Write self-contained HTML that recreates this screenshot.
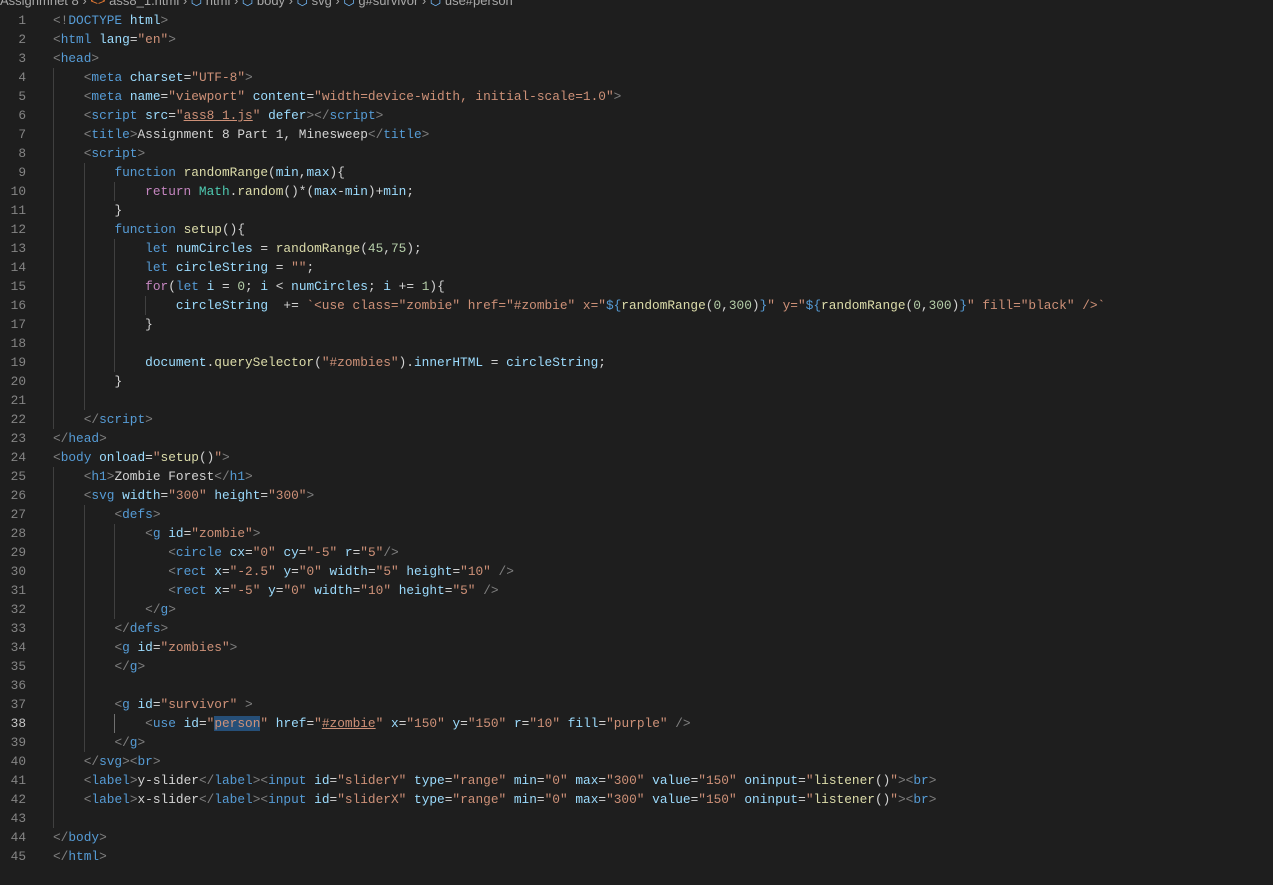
<!DOCTYPE html>
<html><head><meta charset="utf-8"><style>
body{margin:0;background:#1e1e1e;width:1273px;height:885px;overflow:hidden;font-family:"Liberation Mono",monospace;font-size:12.8px;}
.bc{position:absolute;left:0;top:-7px;height:14px;font-family:"Liberation Sans",sans-serif;font-size:13px;color:#a9a9a9;white-space:pre;}
.bc .ic{color:#75beff}
.code{position:absolute;top:11px;left:0;}
.l{height:19px;line-height:19px;white-space:pre;position:relative;}
.n{position:absolute;left:0;width:26px;text-align:right;color:#858585;}
.n.cur{color:#c6c6c6}
.x{position:absolute;left:53px;color:#d4d4d4;}
i{display:inline-block;width:30.72px;height:19px;vertical-align:top;box-sizing:border-box;border-left:1px solid #404040;}
i.h{border-left-color:#707070}
.b{color:#808080}.t{color:#569cd6}.a{color:#9cdcfe}.s{color:#ce9178}.k{color:#569cd6}.c{color:#c586c0}.f{color:#dcdcaa}.v{color:#9cdcfe}.m{color:#b5cea8}.y{color:#4ec9b0}
.sel{background:#264f78}
.u{text-decoration:underline;text-decoration-color:#ce9178}
</style></head><body>
<div class="bc">Assignmnet 8 <span>›</span> <span style="color:#e37933">&lt;&gt;</span> ass8_1.html › <span class="ic">⬡</span> html › <span class="ic">⬡</span> body › <span class="ic">⬡</span> svg › <span class="ic">⬡</span> g#survivor › <span class="ic">⬡</span> use#person</div>
<div class="code">
<div class="l"><span class="n">1</span><span class="x"><span class="b">&lt;!</span><span class="t">DOCTYPE</span> <span class="a">html</span><span class="b">&gt;</span></span></div>
<div class="l"><span class="n">2</span><span class="x"><span class="b">&lt;</span><span class="t">html</span> <span class="a">lang</span>=<span class="s">"en"</span><span class="b">&gt;</span></span></div>
<div class="l"><span class="n">3</span><span class="x"><span class="b">&lt;</span><span class="t">head</span><span class="b">&gt;</span></span></div>
<div class="l"><span class="n">4</span><span class="x"><i></i><span class="b">&lt;</span><span class="t">meta</span> <span class="a">charset</span>=<span class="s">"UTF-8"</span><span class="b">&gt;</span></span></div>
<div class="l"><span class="n">5</span><span class="x"><i></i><span class="b">&lt;</span><span class="t">meta</span> <span class="a">name</span>=<span class="s">"viewport"</span> <span class="a">content</span>=<span class="s">"width=device-width, initial-scale=1.0"</span><span class="b">&gt;</span></span></div>
<div class="l"><span class="n">6</span><span class="x"><i></i><span class="b">&lt;</span><span class="t">script</span> <span class="a">src</span>=<span class="s">"<span class="u">ass8_1.js</span>"</span> <span class="a">defer</span><span class="b">&gt;&lt;/</span><span class="t">script</span><span class="b">&gt;</span></span></div>
<div class="l"><span class="n">7</span><span class="x"><i></i><span class="b">&lt;</span><span class="t">title</span><span class="b">&gt;</span>Assignment 8 Part 1, Minesweep<span class="b">&lt;/</span><span class="t">title</span><span class="b">&gt;</span></span></div>
<div class="l"><span class="n">8</span><span class="x"><i></i><span class="b">&lt;</span><span class="t">script</span><span class="b">&gt;</span></span></div>
<div class="l"><span class="n">9</span><span class="x"><i></i><i></i><span class="k">function</span> <span class="f">randomRange</span>(<span class="v">min</span>,<span class="v">max</span>){</span></div>
<div class="l"><span class="n">10</span><span class="x"><i></i><i></i><i></i><span class="c">return</span> <span class="y">Math</span>.<span class="f">random</span>()*(<span class="v">max</span>-<span class="v">min</span>)+<span class="v">min</span>;</span></div>
<div class="l"><span class="n">11</span><span class="x"><i></i><i></i>}</span></div>
<div class="l"><span class="n">12</span><span class="x"><i></i><i></i><span class="k">function</span> <span class="f">setup</span>(){</span></div>
<div class="l"><span class="n">13</span><span class="x"><i></i><i></i><i></i><span class="k">let</span> <span class="v">numCircles</span> = <span class="f">randomRange</span>(<span class="m">45</span>,<span class="m">75</span>);</span></div>
<div class="l"><span class="n">14</span><span class="x"><i></i><i></i><i></i><span class="k">let</span> <span class="v">circleString</span> = <span class="s">""</span>;</span></div>
<div class="l"><span class="n">15</span><span class="x"><i></i><i></i><i></i><span class="c">for</span>(<span class="k">let</span> <span class="v">i</span> = <span class="m">0</span>; <span class="v">i</span> &lt; <span class="v">numCircles</span>; <span class="v">i</span> += <span class="m">1</span>){</span></div>
<div class="l"><span class="n">16</span><span class="x"><i></i><i></i><i></i><i></i><span class="v">circleString</span>  += <span class="s">`&lt;use class="zombie" href="#zombie" x="</span><span class="k">${</span><span class="f">randomRange</span>(<span class="m">0</span>,<span class="m">300</span>)<span class="k">}</span><span class="s">" y="</span><span class="k">${</span><span class="f">randomRange</span>(<span class="m">0</span>,<span class="m">300</span>)<span class="k">}</span><span class="s">" fill="black" /&gt;`</span></span></div>
<div class="l"><span class="n">17</span><span class="x"><i></i><i></i><i></i>}</span></div>
<div class="l"><span class="n">18</span><span class="x"><i></i><i></i><i></i></span></div>
<div class="l"><span class="n">19</span><span class="x"><i></i><i></i><i></i><span class="v">document</span>.<span class="f">querySelector</span>(<span class="s">"#zombies"</span>).<span class="v">innerHTML</span> = <span class="v">circleString</span>;</span></div>
<div class="l"><span class="n">20</span><span class="x"><i></i><i></i>}</span></div>
<div class="l"><span class="n">21</span><span class="x"><i></i><i></i></span></div>
<div class="l"><span class="n">22</span><span class="x"><i></i><span class="b">&lt;/</span><span class="t">script</span><span class="b">&gt;</span></span></div>
<div class="l"><span class="n">23</span><span class="x"><span class="b">&lt;/</span><span class="t">head</span><span class="b">&gt;</span></span></div>
<div class="l"><span class="n">24</span><span class="x"><span class="b">&lt;</span><span class="t">body</span> <span class="a">onload</span>=<span class="s">"</span><span class="f">setup</span>()<span class="s">"</span><span class="b">&gt;</span></span></div>
<div class="l"><span class="n">25</span><span class="x"><i></i><span class="b">&lt;</span><span class="t">h1</span><span class="b">&gt;</span>Zombie Forest<span class="b">&lt;/</span><span class="t">h1</span><span class="b">&gt;</span></span></div>
<div class="l"><span class="n">26</span><span class="x"><i></i><span class="b">&lt;</span><span class="t">svg</span> <span class="a">width</span>=<span class="s">"300"</span> <span class="a">height</span>=<span class="s">"300"</span><span class="b">&gt;</span></span></div>
<div class="l"><span class="n">27</span><span class="x"><i></i><i></i><span class="b">&lt;</span><span class="t">defs</span><span class="b">&gt;</span></span></div>
<div class="l"><span class="n">28</span><span class="x"><i></i><i></i><i></i><span class="b">&lt;</span><span class="t">g</span> <span class="a">id</span>=<span class="s">"zombie"</span><span class="b">&gt;</span></span></div>
<div class="l"><span class="n">29</span><span class="x"><i></i><i></i><i></i>   <span class="b">&lt;</span><span class="t">circle</span> <span class="a">cx</span>=<span class="s">"0"</span> <span class="a">cy</span>=<span class="s">"-5"</span> <span class="a">r</span>=<span class="s">"5"</span><span class="b">/&gt;</span></span></div>
<div class="l"><span class="n">30</span><span class="x"><i></i><i></i><i></i>   <span class="b">&lt;</span><span class="t">rect</span> <span class="a">x</span>=<span class="s">"-2.5"</span> <span class="a">y</span>=<span class="s">"0"</span> <span class="a">width</span>=<span class="s">"5"</span> <span class="a">height</span>=<span class="s">"10"</span> <span class="b">/&gt;</span></span></div>
<div class="l"><span class="n">31</span><span class="x"><i></i><i></i><i></i>   <span class="b">&lt;</span><span class="t">rect</span> <span class="a">x</span>=<span class="s">"-5"</span> <span class="a">y</span>=<span class="s">"0"</span> <span class="a">width</span>=<span class="s">"10"</span> <span class="a">height</span>=<span class="s">"5"</span> <span class="b">/&gt;</span></span></div>
<div class="l"><span class="n">32</span><span class="x"><i></i><i></i><i></i><span class="b">&lt;/</span><span class="t">g</span><span class="b">&gt;</span></span></div>
<div class="l"><span class="n">33</span><span class="x"><i></i><i></i><span class="b">&lt;/</span><span class="t">defs</span><span class="b">&gt;</span></span></div>
<div class="l"><span class="n">34</span><span class="x"><i></i><i></i><span class="b">&lt;</span><span class="t">g</span> <span class="a">id</span>=<span class="s">"zombies"</span><span class="b">&gt;</span></span></div>
<div class="l"><span class="n">35</span><span class="x"><i></i><i></i><span class="b">&lt;/</span><span class="t">g</span><span class="b">&gt;</span></span></div>
<div class="l"><span class="n">36</span><span class="x"><i></i><i></i></span></div>
<div class="l"><span class="n">37</span><span class="x"><i></i><i></i><span class="b">&lt;</span><span class="t">g</span> <span class="a">id</span>=<span class="s">"survivor"</span> <span class="b">&gt;</span></span></div>
<div class="l"><span class="n cur">38</span><span class="x"><i></i><i></i><i class="h"></i><span class="b">&lt;</span><span class="t">use</span> <span class="a">id</span>=<span class="s">"<span class="sel">person</span>"</span> <span class="a">href</span>=<span class="s">"<span class="u">#zombie</span>"</span> <span class="a">x</span>=<span class="s">"150"</span> <span class="a">y</span>=<span class="s">"150"</span> <span class="a">r</span>=<span class="s">"10"</span> <span class="a">fill</span>=<span class="s">"purple"</span> <span class="b">/&gt;</span></span></div>
<div class="l"><span class="n">39</span><span class="x"><i></i><i></i><span class="b">&lt;/</span><span class="t">g</span><span class="b">&gt;</span></span></div>
<div class="l"><span class="n">40</span><span class="x"><i></i><span class="b">&lt;/</span><span class="t">svg</span><span class="b">&gt;&lt;</span><span class="t">br</span><span class="b">&gt;</span></span></div>
<div class="l"><span class="n">41</span><span class="x"><i></i><span class="b">&lt;</span><span class="t">label</span><span class="b">&gt;</span>y-slider<span class="b">&lt;/</span><span class="t">label</span><span class="b">&gt;&lt;</span><span class="t">input</span> <span class="a">id</span>=<span class="s">"sliderY"</span> <span class="a">type</span>=<span class="s">"range"</span> <span class="a">min</span>=<span class="s">"0"</span> <span class="a">max</span>=<span class="s">"300"</span> <span class="a">value</span>=<span class="s">"150"</span> <span class="a">oninput</span>=<span class="s">"</span><span class="f">listener</span>()<span class="s">"</span><span class="b">&gt;&lt;</span><span class="t">br</span><span class="b">&gt;</span></span></div>
<div class="l"><span class="n">42</span><span class="x"><i></i><span class="b">&lt;</span><span class="t">label</span><span class="b">&gt;</span>x-slider<span class="b">&lt;/</span><span class="t">label</span><span class="b">&gt;&lt;</span><span class="t">input</span> <span class="a">id</span>=<span class="s">"sliderX"</span> <span class="a">type</span>=<span class="s">"range"</span> <span class="a">min</span>=<span class="s">"0"</span> <span class="a">max</span>=<span class="s">"300"</span> <span class="a">value</span>=<span class="s">"150"</span> <span class="a">oninput</span>=<span class="s">"</span><span class="f">listener</span>()<span class="s">"</span><span class="b">&gt;&lt;</span><span class="t">br</span><span class="b">&gt;</span></span></div>
<div class="l"><span class="n">43</span><span class="x"><i></i></span></div>
<div class="l"><span class="n">44</span><span class="x"><span class="b">&lt;/</span><span class="t">body</span><span class="b">&gt;</span></span></div>
<div class="l"><span class="n">45</span><span class="x"><span class="b">&lt;/</span><span class="t">html</span><span class="b">&gt;</span></span></div>
</div>
</body></html>
